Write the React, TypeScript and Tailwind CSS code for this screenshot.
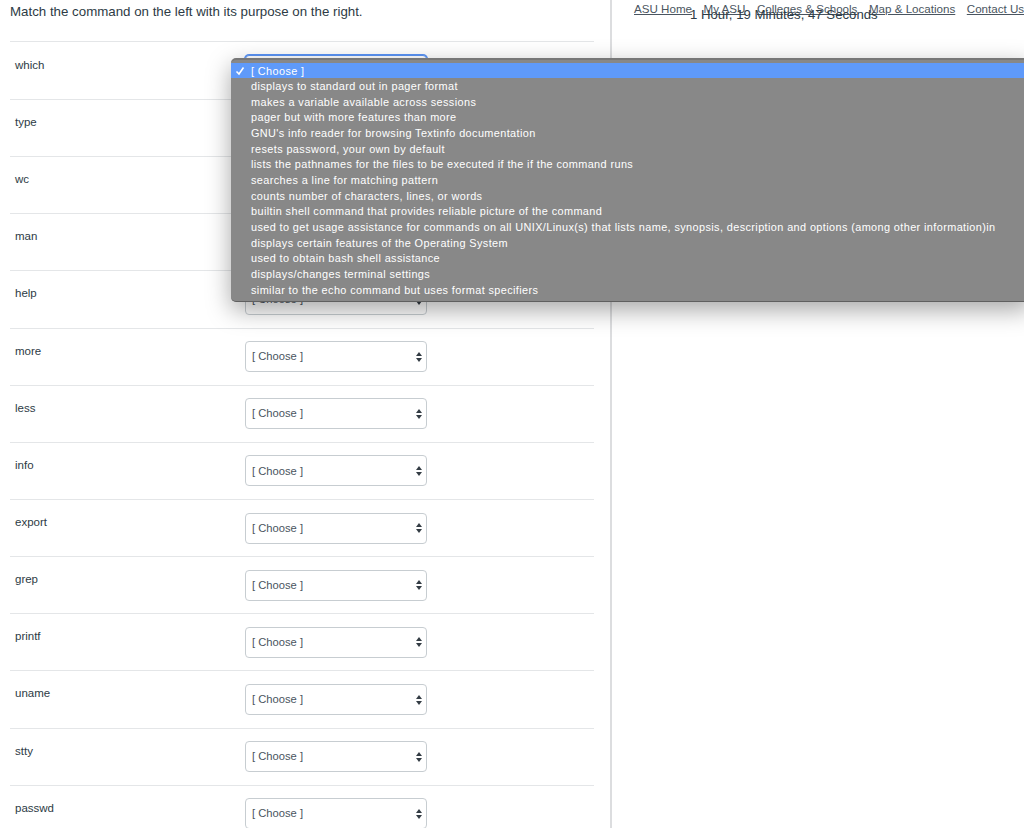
import React from 'react';

const commands = ['which', 'type', 'wc', 'man', 'help', 'more', 'less', 'info', 'export', 'grep', 'printf', 'uname', 'stty', 'passwd'];

const options = [
  'displays to standard out in pager format',
  'makes a variable available across sessions',
  'pager but with more features than more',
  "GNU's info reader for browsing Textinfo documentation",
  'resets password, your own by default',
  'lists the pathnames for the files to be executed if the if the command runs',
  'searches a line for matching pattern',
  'counts number of characters, lines, or words',
  'builtin shell command that provides reliable picture of the command',
  'used to get usage assistance for commands on all UNIX/Linux(s) that lists name, synopsis, description and options (among other information)in',
  'displays certain features of the Operating System',
  'used to obtain bash shell assistance',
  'displays/changes terminal settings',
  'similar to the echo command but uses format specifiers',
];

const links = ['ASU Home', 'My ASU', 'Colleges & Schools', 'Map & Locations', 'Contact Us'];

const SelectBox = ({ focused }: { focused: boolean }) => {
  return <div className={`mt-[12.6px] ml-[235px] h-[31px] w-[182px] shrink-0 rounded-[4px] bg-white border flex items-center justify-between pl-[6px] pr-[3px] text-[11.2px] text-[#4a5560] ${focused ? 'border-[#5b94f5] ring-1 ring-[#5b94f5]' : 'border-[#c7cdd1]'}`}>
      <span>[ Choose ]</span>
      <svg width="8" height="12" viewBox="0 0 8 12" className="text-[#333c44]">
        <path d="M4 1 L7 5 L1 5 Z" fill="currentColor" />
        <path d="M4 11 L7 7 L1 7 Z" fill="currentColor" />
      </svg>
    </div>;
};

const Row = ({ name, focused }: { name: string; focused: boolean }) => {
  return <div className={`relative border-t border-[#e4e6e8] w-[584px] ${focused ? 'h-[58px]' : 'h-[57.15px]'}`}>
      <span className={`absolute left-[5px] text-[11.5px] leading-[16px] text-[#2d3b45] ${focused ? 'top-[14.5px]' : 'top-[14px]'}`}>{name}</span>
      <SelectBox focused={focused} />
    </div>;
};

export default function App() {
  return <div className="relative flex h-[828px] w-[1024px] overflow-hidden bg-white font-['Liberation_Sans',Arial,sans-serif]">
      <div className="w-[612px] shrink-0 border-r-2 border-[#dcdddf] pl-[10px]">
        <p className="pt-[4px] h-[41px] text-[13.3px] leading-[16px] text-[#2d3b45]">Match the command on the left with its purpose on the right.</p>
        {commands.map((c, i) => <Row key={c} name={c} focused={i === 0} />)}
      </div>
      <div className="flex-1 min-w-0 relative">
        <div className="flex gap-[11.5px] pl-[22px] pt-[2px] text-[11.6px] leading-[14px] text-[#4a5560] whitespace-nowrap">
          {links.map(l => <a key={l} className="underline">{l}</a>)}
        </div>
        <span className="absolute left-[78px] top-[7px] text-[13.2px] leading-[16px] text-[#2d3b45] whitespace-nowrap">1 Hour, 19 Minutes, 47 Seconds</span>
      </div>

      <div className="absolute left-[231px] top-[58px] w-[800px] h-[244px] rounded-[5px] bg-[#888888] border-t-2 border-b border-t-[#777777] border-b-[#5f5f5f] shadow-[0_8px_24px_rgba(0,0,0,0.35)] pt-[3px] text-[10.9px] font-medium text-white whitespace-nowrap">
        <div className="relative h-[15px] leading-[16px] bg-[#5f9afa] pl-[20px] tracking-[0.39px]">
          <svg width="10" height="10" viewBox="0 0 10 10" className="absolute left-[4px] top-[3px]">
            <path d="M1.5 5.5 L4 8 L8.5 1.5" fill="none" stroke="white" strokeWidth="1.6" />
          </svg>
          [ Choose ]
        </div>
        {options.map(o => <div key={o} className="h-[15.68px] leading-[16.5px] pl-[20px] tracking-[0.39px]">{o}</div>)}
      </div>
    </div>;
}
